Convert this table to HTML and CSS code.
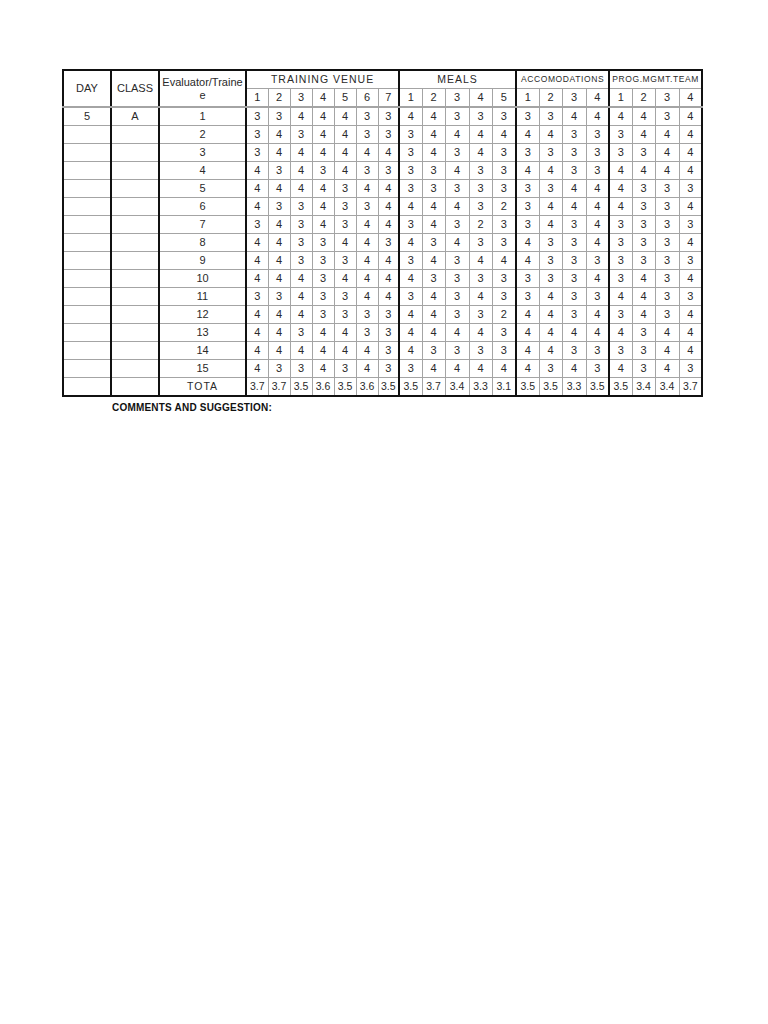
FILE: index.html
```html
<!DOCTYPE html>
<html>
<head>
<meta charset="utf-8">
<link rel="stylesheet" href="styles.css">
</head>
<body>
<div class="sheet">
<table class="grid">
<colgroup>
<col class="w48"><col class="w48"><col class="w87">
<col class="w22"><col class="w22"><col class="w22"><col class="w22"><col class="w22"><col class="w22"><col class="w21">
<col class="w23"><col class="w23"><col class="w24"><col class="w23"><col class="w24">
<col class="w23"><col class="w23"><col class="w24"><col class="w23">
<col class="w23"><col class="w23"><col class="w24"><col class="w23">
</colgroup>
<thead>
<tr class="h1">
<th rowspan="2" class="side">DAY</th>
<th rowspan="2" class="side g">CLASS</th>
<th rowspan="2" class="side g">Evaluator/Traine<br>e</th>
<th colspan="7" class="g grp">TRAINING VENUE</th>
<th colspan="5" class="g grp">MEALS</th>
<th colspan="4" class="g grp small">ACCOMODATIONS</th>
<th colspan="4" class="g grp small">PROG.MGMT.TEAM</th>
</tr>
<tr class="h2">
<th class="g">1</th><th>2</th><th>3</th><th>4</th><th>5</th><th>6</th><th>7</th>
<th class="g">1</th><th>2</th><th>3</th><th>4</th><th>5</th>
<th class="g">1</th><th>2</th><th>3</th><th>4</th>
<th class="g">1</th><th>2</th><th>3</th><th>4</th>
</tr>
</thead>
<tbody>
<tr><td>5</td><td class="g">A</td><td class="g">1</td><td class="g">3</td><td>3</td><td>4</td><td>4</td><td>4</td><td>3</td><td>3</td><td class="g">4</td><td>4</td><td>3</td><td>3</td><td>3</td><td class="g">3</td><td>3</td><td>4</td><td>4</td><td class="g">4</td><td>4</td><td>3</td><td>4</td></tr>
<tr><td></td><td class="g"></td><td class="g">2</td><td class="g">3</td><td>4</td><td>3</td><td>4</td><td>4</td><td>3</td><td>3</td><td class="g">3</td><td>4</td><td>4</td><td>4</td><td>4</td><td class="g">4</td><td>4</td><td>3</td><td>3</td><td class="g">3</td><td>4</td><td>4</td><td>4</td></tr>
<tr><td></td><td class="g"></td><td class="g">3</td><td class="g">3</td><td>4</td><td>4</td><td>4</td><td>4</td><td>4</td><td>4</td><td class="g">3</td><td>4</td><td>3</td><td>4</td><td>3</td><td class="g">3</td><td>3</td><td>3</td><td>3</td><td class="g">3</td><td>3</td><td>4</td><td>4</td></tr>
<tr><td></td><td class="g"></td><td class="g">4</td><td class="g">4</td><td>3</td><td>4</td><td>3</td><td>4</td><td>3</td><td>3</td><td class="g">3</td><td>3</td><td>4</td><td>3</td><td>3</td><td class="g">4</td><td>4</td><td>3</td><td>3</td><td class="g">4</td><td>4</td><td>4</td><td>4</td></tr>
<tr><td></td><td class="g"></td><td class="g">5</td><td class="g">4</td><td>4</td><td>4</td><td>4</td><td>3</td><td>4</td><td>4</td><td class="g">3</td><td>3</td><td>3</td><td>3</td><td>3</td><td class="g">3</td><td>3</td><td>4</td><td>4</td><td class="g">4</td><td>3</td><td>3</td><td>3</td></tr>
<tr><td></td><td class="g"></td><td class="g">6</td><td class="g">4</td><td>3</td><td>3</td><td>4</td><td>3</td><td>3</td><td>4</td><td class="g">4</td><td>4</td><td>4</td><td>3</td><td>2</td><td class="g">3</td><td>4</td><td>4</td><td>4</td><td class="g">4</td><td>3</td><td>3</td><td>4</td></tr>
<tr><td></td><td class="g"></td><td class="g">7</td><td class="g">3</td><td>4</td><td>3</td><td>4</td><td>3</td><td>4</td><td>4</td><td class="g">3</td><td>4</td><td>3</td><td>2</td><td>3</td><td class="g">3</td><td>4</td><td>3</td><td>4</td><td class="g">3</td><td>3</td><td>3</td><td>3</td></tr>
<tr><td></td><td class="g"></td><td class="g">8</td><td class="g">4</td><td>4</td><td>3</td><td>3</td><td>4</td><td>4</td><td>3</td><td class="g">4</td><td>3</td><td>4</td><td>3</td><td>3</td><td class="g">4</td><td>3</td><td>3</td><td>4</td><td class="g">3</td><td>3</td><td>3</td><td>4</td></tr>
<tr><td></td><td class="g"></td><td class="g">9</td><td class="g">4</td><td>4</td><td>3</td><td>3</td><td>3</td><td>4</td><td>4</td><td class="g">3</td><td>4</td><td>3</td><td>4</td><td>4</td><td class="g">4</td><td>3</td><td>3</td><td>3</td><td class="g">3</td><td>3</td><td>3</td><td>3</td></tr>
<tr><td></td><td class="g"></td><td class="g">10</td><td class="g">4</td><td>4</td><td>4</td><td>3</td><td>4</td><td>4</td><td>4</td><td class="g">4</td><td>3</td><td>3</td><td>3</td><td>3</td><td class="g">3</td><td>3</td><td>3</td><td>4</td><td class="g">3</td><td>4</td><td>3</td><td>4</td></tr>
<tr><td></td><td class="g"></td><td class="g">11</td><td class="g">3</td><td>3</td><td>4</td><td>3</td><td>3</td><td>4</td><td>4</td><td class="g">3</td><td>4</td><td>3</td><td>4</td><td>3</td><td class="g">3</td><td>4</td><td>3</td><td>3</td><td class="g">4</td><td>4</td><td>3</td><td>3</td></tr>
<tr><td></td><td class="g"></td><td class="g">12</td><td class="g">4</td><td>4</td><td>4</td><td>3</td><td>3</td><td>3</td><td>3</td><td class="g">4</td><td>4</td><td>3</td><td>3</td><td>2</td><td class="g">4</td><td>4</td><td>3</td><td>4</td><td class="g">3</td><td>4</td><td>3</td><td>4</td></tr>
<tr><td></td><td class="g"></td><td class="g">13</td><td class="g">4</td><td>4</td><td>3</td><td>4</td><td>4</td><td>3</td><td>3</td><td class="g">4</td><td>4</td><td>4</td><td>4</td><td>3</td><td class="g">4</td><td>4</td><td>4</td><td>4</td><td class="g">4</td><td>3</td><td>4</td><td>4</td></tr>
<tr><td></td><td class="g"></td><td class="g">14</td><td class="g">4</td><td>4</td><td>4</td><td>4</td><td>4</td><td>4</td><td>3</td><td class="g">4</td><td>3</td><td>3</td><td>3</td><td>3</td><td class="g">4</td><td>4</td><td>3</td><td>3</td><td class="g">3</td><td>3</td><td>4</td><td>4</td></tr>
<tr><td></td><td class="g"></td><td class="g">15</td><td class="g">4</td><td>3</td><td>3</td><td>4</td><td>3</td><td>4</td><td>3</td><td class="g">3</td><td>4</td><td>4</td><td>4</td><td>4</td><td class="g">4</td><td>3</td><td>4</td><td>3</td><td class="g">4</td><td>3</td><td>4</td><td>3</td></tr>
<tr class="total"><td></td><td class="g"></td><td class="g label">TOTA</td><td class="g">3.7</td><td>3.7</td><td>3.5</td><td>3.6</td><td>3.5</td><td>3.6</td><td>3.5</td><td class="g">3.5</td><td>3.7</td><td>3.4</td><td>3.3</td><td>3.1</td><td class="g">3.5</td><td>3.5</td><td>3.3</td><td>3.5</td><td class="g">3.5</td><td>3.4</td><td>3.4</td><td>3.7</td></tr>
</tbody>
</table>
<p class="comments">COMMENTS AND SUGGESTION:</p>
</div>
</body>
</html>
```

FILE: styles.css
```css
html, body {
  margin: 0;
  padding: 0;
  background: #ffffff;
}

.sheet {
  padding: 69px 0 0 62px;
}

.grid {
  border-collapse: collapse;
  table-layout: fixed;
  width: 639px;
  border: 2px solid #111111;
  font-family: "Liberation Sans", Arial, sans-serif;
  font-size: 11px;
  color: #2a2a2a;
}

.w48 { width: 48px; }
.w87 { width: 87px; }
.w21 { width: 21px; }
.w22 { width: 22px; }
.w23 { width: 23px; }
.w24 { width: 24px; }

.grid th,
.grid td {
  border: 1px solid #a4a4a4;
  padding: 0;
  text-align: center;
  vertical-align: middle;
  font-weight: normal;
  line-height: 13px;
  overflow: hidden;
  white-space: nowrap;
}

.grid .g {
  border-left: 2px solid #111111;
}

.grid thead tr.h1 th {
  height: 17px;
  border-top: 2px solid #111111;
}

.grid thead tr.h2 th {
  height: 17px;
  border-bottom: 2px solid #a4a4a4;
}

.grid th.side {
  border-bottom: 2px solid #a4a4a4;
}

.grid th.grp {
  letter-spacing: 1px;
  font-size: 10.5px;
}

.grid th.small {
  font-size: 8.5px;
  letter-spacing: 0.6px;
}

.grid tbody td {
  height: 17px;
}

.grid tr.total td {
  font-size: 10.5px;
  border-bottom: 2px solid #111111;
}

.grid tr.total td.label {
  letter-spacing: 1px;
}

.comments {
  margin: 5px 0 0 50px;
  font-family: "Liberation Sans", Arial, sans-serif;
  font-weight: bold;
  font-size: 10px;
  letter-spacing: 0.2px;
  line-height: 12px;
  color: #111111;
}
```
